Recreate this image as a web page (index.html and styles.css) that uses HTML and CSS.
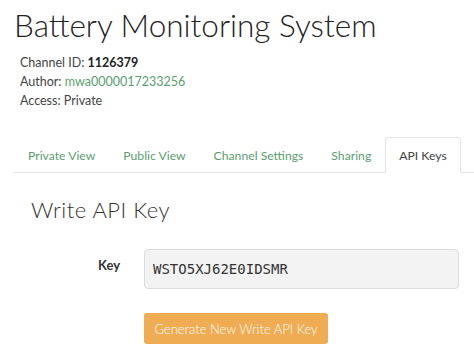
FILE: index.html
```html
<!DOCTYPE html>
<html lang="en">
<head>
  <meta charset="UTF-8">
  <title>Battery Monitoring System</title>
  <link rel="stylesheet" href="styles.css">
</head>
<body>

  <div class="page">
    <h1 class="title">Battery Monitoring System</h1>

    <div class="channel-info">
      <p>Channel ID: <strong>1126379</strong></p>
      <p>Author: <a href="#">mwa0000017233256</a></p>
      <p>Access: Private</p>
    </div>

    <ul class="tabs">
      <li><a href="#">Private View</a></li>
      <li><a href="#">Public View</a></li>
      <li><a href="#">Channel Settings</a></li>
      <li><a href="#">Sharing</a></li>
      <li class="active"><a href="#">API Keys</a></li>
    </ul>

    <div class="panel">
      <h2 class="panel-title">Write API Key</h2>

      <div class="form-row">
        <label for="writeKey">Key</label>
        <input id="writeKey" class="key-field" type="text" value="WSTO5XJ62E0IDSMR" readonly>
      </div>

      <div class="form-row">
        <span></span>
        <button class="btn-warning">Generate New Write API Key</button>
      </div>
    </div>
  </div>

</body>
</html>
```

FILE: styles.css
```css
body {
  margin: 0;
  font-family: 'Lato', 'Noto Sans', sans-serif;
  color: #333;
  background: #fff;
}

.page {
  padding: 0 0 0 14px;
}

.title {
  margin: 0;
  padding-top: 6px;
  font-family: 'Lato', sans-serif;
  font-weight: 300;
  font-size: 31.5px;
  line-height: 38px;
  letter-spacing: 0;
  color: #222;
}

.channel-info {
  margin-top: 9px;
  padding-left: 6px;
  font-size: 12.5px;
  color: #444;
}

.channel-info p {
  margin: 0;
  line-height: 19px;
}

.channel-info strong {
  color: #222;
}

.channel-info a {
  color: #5a9e6f;
  text-decoration: none;
}

.tabs {
  list-style: none;
  margin: 27px 0 0;
  padding: 0;
  display: flex;
  border-bottom: 1px solid #e3e3e3;
}

.tabs li {
  margin-bottom: -1px;
}

.tabs a {
  display: block;
  padding: 0 13px;
  height: 34px;
  line-height: 35px;
  font-size: 12.2px;
  white-space: nowrap;
  color: #5a9e6f;
  text-decoration: none;
  border: 1px solid transparent;
  border-radius: 3px 3px 0 0;
}

.tabs .active a {
  color: #444;
  border-color: #e3e3e3;
  border-bottom-color: #fff;
  background: #fff;
}

.panel {
  padding: 0 15px 0 17px;
}

.panel-title {
  margin: 24px 0 26px;
  font-weight: 300;
  font-size: 22px;
  line-height: 26px;
  letter-spacing: 0.5px;
  color: #333;
}

.form-row {
  display: grid;
  grid-template-columns: 89px 315px;
  column-gap: 24px;
  align-items: center;
  margin-bottom: 24px;
}

.form-row label {
  text-align: right;
  font-weight: bold;
  font-size: 13px;
  color: #333;
  padding-bottom: 8px;
}

.key-field {
  box-sizing: border-box;
  height: 40px;
  padding: 0 8px;
  border: 1px solid #dcdcdc;
  border-radius: 4px;
  background: #f3f3f3;
  font-family: 'DejaVu Sans Mono', monospace;
  font-size: 14px;
  color: #333;
}

.btn-warning {
  justify-self: start;
  width: 184px;
  height: 31px;
  border: none;
  border-radius: 3px;
  background: #efac52;
  color: #fff;
  font-family: 'Lato', sans-serif;
  font-weight: 300;
  font-size: 13px;
  cursor: pointer;
}
```
